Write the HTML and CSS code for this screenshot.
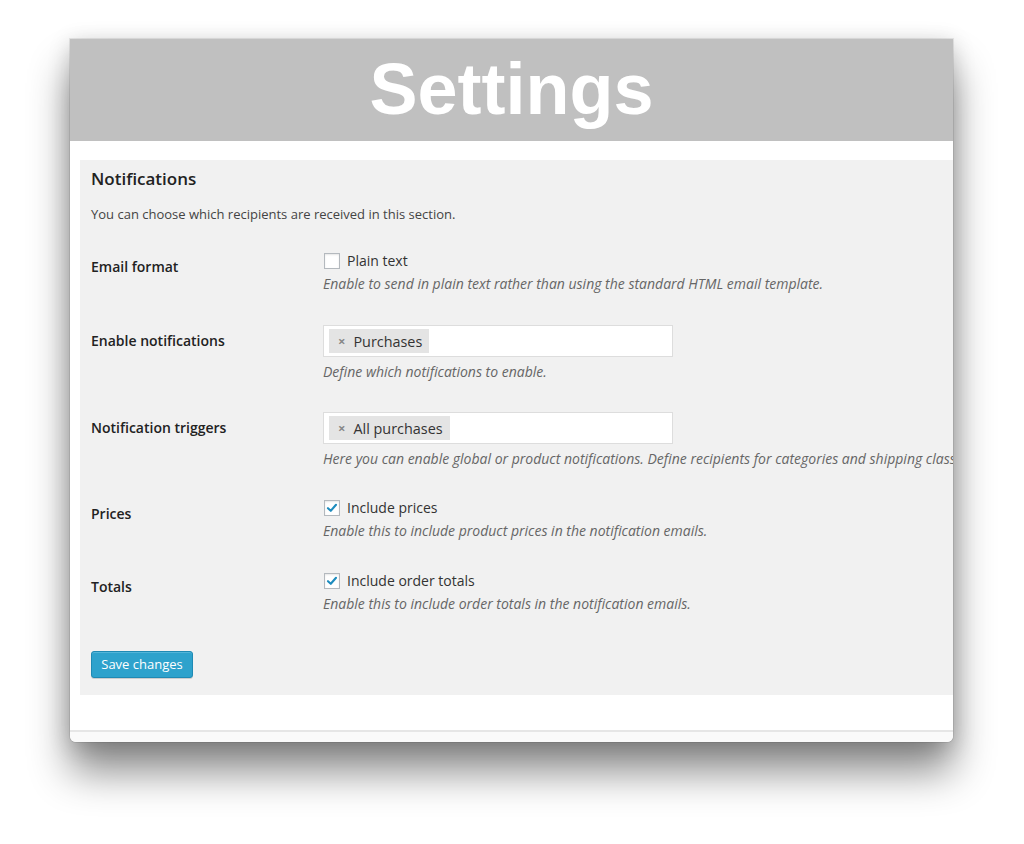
FILE: index.html
```html
<!DOCTYPE html>
<html>
<head>
<meta charset="utf-8">
<link rel="stylesheet" href="styles.css">
</head>
<body>
<div class="window">
  <div class="titlebar"><h1 class="title">Settings</h1></div>
  <div class="content">
    <div class="panel">
      <h2 class="heading">Notifications</h2>
      <p class="intro">You can choose which recipients are received in this section.</p>

      <div class="row row-1">
        <div class="label">Email format</div>
        <div class="control">
          <label class="check-line"><span class="checkbox"></span><span class="check-text">Plain text</span></label>
          <p class="desc">Enable to send in plain text rather than using the standard HTML email template.</p>
        </div>
      </div>

      <div class="row row-2">
        <div class="label">Enable notifications</div>
        <div class="control">
          <div class="select"><span class="token"><span class="token-x">×</span>Purchases</span></div>
          <p class="desc desc-input">Define which notifications to enable.</p>
        </div>
      </div>

      <div class="row row-3">
        <div class="label">Notification triggers</div>
        <div class="control">
          <div class="select"><span class="token"><span class="token-x">×</span>All purchases</span></div>
          <p class="desc desc-input">Here you can enable global or product notifications. Define recipients for categories and shipping classes.</p>
        </div>
      </div>

      <div class="row row-4">
        <div class="label">Prices</div>
        <div class="control">
          <label class="check-line"><span class="checkbox checked"><svg viewBox="0 0 16 16" width="14" height="14"><path d="M3.4 8.2 L6.6 11.2 L12.6 4.3" fill="none" stroke="#1e8cbe" stroke-width="2.4" stroke-linecap="round" stroke-linejoin="round"/></svg></span><span class="check-text">Include prices</span></label>
          <p class="desc">Enable this to include product prices in the notification emails.</p>
        </div>
      </div>

      <div class="row row-5">
        <div class="label">Totals</div>
        <div class="control">
          <label class="check-line"><span class="checkbox checked"><svg viewBox="0 0 16 16" width="14" height="14"><path d="M3.4 8.2 L6.6 11.2 L12.6 4.3" fill="none" stroke="#1e8cbe" stroke-width="2.4" stroke-linecap="round" stroke-linejoin="round"/></svg></span><span class="check-text">Include order totals</span></label>
          <p class="desc">Enable this to include order totals in the notification emails.</p>
        </div>
      </div>

      <div class="actions"><button class="button">Save changes</button></div>
    </div>
    <div class="footer-line"></div>
  </div>
</div>
</body>
</html>
```

FILE: styles.css
```css
* { box-sizing: border-box; }
html, body { margin: 0; padding: 0; background: #ffffff; }
body { width: 1024px; height: 844px; overflow: hidden; font-family: "Open Sans", "Liberation Sans", sans-serif; }

.window {
  margin: 39px 0 0 70px;
  width: 883px;
  height: 703px;
  background: #ffffff;
  border-radius: 0 0 6px 6px;
  overflow: hidden;
  box-shadow: 0 30px 40px rgba(0,0,0,0.45), 0 4px 22px rgba(0,0,0,0.18), 0 0 0 1px rgba(0,0,0,0.08);
  display: flex;
  flex-direction: column;
}

.titlebar {
  height: 102px;
  background: #c0c0c0;
  display: flex;
  align-items: center;
  justify-content: center;
}
.title {
  margin: 0;
  font-family: "Liberation Sans", Arial, sans-serif;
  font-weight: bold;
  font-size: 72px;
  line-height: 1;
  color: #ffffff;
  padding-bottom: 2px;
}

.content {
  flex: 1;
  padding: 19px 0 0 10px;
  display: flex;
  flex-direction: column;
}

.panel {
  height: 535px;
  background: #f1f1f1;
  padding: 7px 0 0 11px;
  overflow: hidden;
}

.heading {
  margin: 0;
  font-size: 17px;
  line-height: 24px;
  font-weight: 600;
  color: #222222;
}
.intro {
  margin: 13px 0 0 0;
  font-size: 13px;
  line-height: 20px;
  color: #444444;
}

.row {
  display: flex;
  align-items: flex-start;
}
.row-1 { margin-top: 27px; }
.row-2 { margin-top: 31px; }
.row-3 { margin-top: 30px; }
.row-4 { margin-top: 29px; }
.row-5 { margin-top: 30px; }

.label {
  width: 232px;
  flex: none;
  padding-top: 6px;
  font-size: 14px;
  line-height: 20px;
  font-weight: 600;
  color: #222222;
}
.control {
  flex: none;
  white-space: nowrap;
}

.check-line {
  display: flex;
  align-items: center;
  height: 20px;
  font-size: 14px;
  color: #333333;
}
.checkbox {
  width: 16px;
  height: 16px;
  margin-left: 1px;
  margin-right: 7px;
  border: 1px solid #b4b9be;
  background: #ffffff;
  box-shadow: inset 0 1px 2px rgba(0,0,0,0.1);
  display: flex;
  align-items: center;
  justify-content: center;
}
.check-text { line-height: 20px; }

.desc {
  margin: 3px 0 0 0;
  font-size: 14px;
  line-height: 20px;
  font-style: italic;
  color: #666666;
}
.desc-input { margin-top: 5px; }

.select {
  width: 350px;
  height: 32px;
  background: #ffffff;
  border: 1px solid #dddddd;
  padding: 3px 5px;
  display: flex;
  align-items: center;
}
.token {
  height: 24px;
  background: #e4e4e4;
  padding: 0 7px 0 9px;
  display: flex;
  align-items: center;
  font-size: 14.4px;
  color: #333333;
}
.token-x {
  color: #888888;
  font-size: 13px;
  font-weight: bold;
  margin-right: 8px;
}

.actions { margin-top: 37px; }
.button {
  width: 102px;
  height: 27px;
  padding: 0;
  background: #2ea2cc;
  border: 1px solid #1f8ab4;
  border-radius: 3px;
  box-shadow: inset 0 1px 0 rgba(120,200,230,0.5), 0 1px 0 rgba(0,0,0,0.15);
  color: #ffffff;
  font-family: "Open Sans", "Liberation Sans", sans-serif;
  font-size: 13px;
  line-height: 25px;
}

.footer-line {
  margin-top: 35px;
  margin-left: -10px;
  flex: 1;
  border-top: 2px solid #e6e6e6;
  background: #fafafa;
}
```
